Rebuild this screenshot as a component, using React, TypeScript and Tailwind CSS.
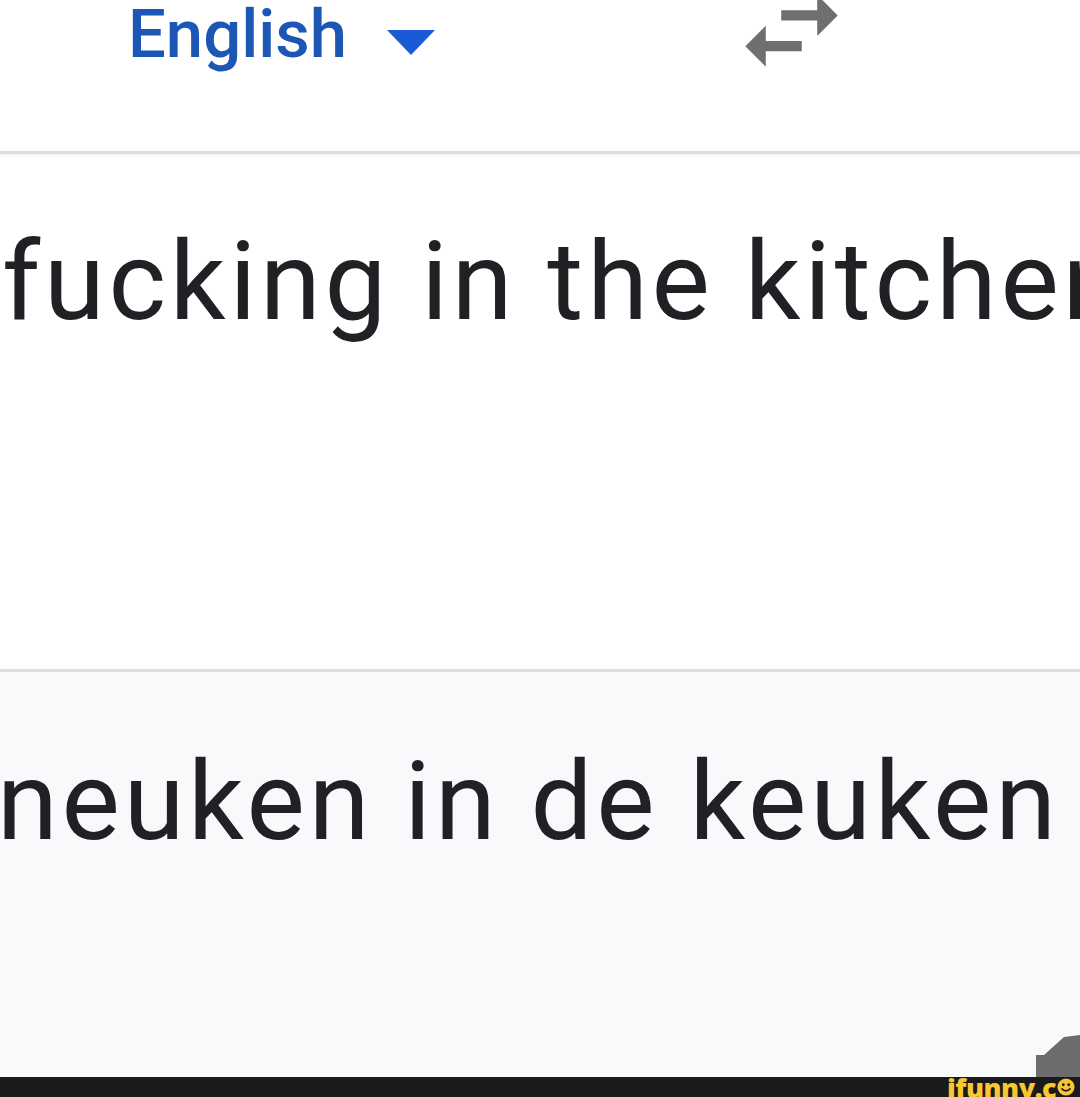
import React from 'react'

function SwapIcon() {
  return (
    <svg width="103" height="77" viewBox="2 6 20 15" fill="#6f6f6f">
      <path d="M6.99 11L3 15l3.99 4v-3H14v-2H6.99v-3zM21 9l-3.99-4v3H10v2h7.01v3L21 9z" />
    </svg>
  )
}

export default function App() {
  return (
    <div className="w-[1080px] h-[1097px] bg-white flex flex-col overflow-hidden relative font-['Roboto','Liberation_Sans',sans-serif] text-[#202124]">
      {/* Language bar */}
      <div className="h-[151px] flex items-start shrink-0">
        <div className="flex items-start pl-[128px] w-[740px]">
          <span className="text-[67px] leading-[68px] font-medium text-[#1c57b5]">English</span>
          <svg className="ml-[40px] mt-[30px]" width="48" height="25" viewBox="0 0 48 25">
            <polygon points="0,0 48,0 24,25" fill="#1a5ad6" />
          </svg>
        </div>
        <SwapIcon />
      </div>
      <div className="h-[3px] bg-[#dcdde0] shadow-[0_2px_3px_rgba(0,0,0,0.06)] shrink-0" />

      {/* Source text */}
      <div className="h-[515px] shrink-0 pt-[73px] whitespace-nowrap overflow-hidden">
        <p className="text-[110px] leading-[110px] tracking-[3.8px] pl-[2px]">fucking in the kitchen</p>
      </div>
      <div className="h-[3px] bg-[#dcdde0] shadow-[0_2px_3px_rgba(0,0,0,0.06)] shrink-0" />

      {/* Translation */}
      <div className="flex-1 bg-[#f8f9fa] pt-[75px] whitespace-nowrap overflow-hidden relative">
        <p className="text-[110px] leading-[110px] tracking-[3.8px] -ml-[3px]">neuken in de keuken</p>
        <svg className="absolute right-0 bottom-0" width="44" height="42" viewBox="0 0 44 42">
          <polygon points="0,42 0,20 8,20 28,2 44,0 44,42" fill="#6c6c6c" />
        </svg>
      </div>

      {/* Watermark bar */}
      <div className="h-[20px] bg-[#1a1a1a] shrink-0 flex justify-end items-start pr-[5px] overflow-hidden">
        <span className="text-[27px] leading-[22px] font-black text-[#f7c633] font-['Open_Sans',sans-serif] tracking-[-0.5px]">ifunny.c</span>
        <svg className="mt-[1px] ml-[1px]" width="18" height="18" viewBox="0 0 20 20">
          <circle cx="10" cy="10" r="9.5" fill="#f7c633" />
          <circle cx="7" cy="7.5" r="1.6" fill="#1a1a1a" />
          <circle cx="13" cy="7.5" r="1.6" fill="#1a1a1a" />
          <path d="M5 11.5 Q10 17 15 11.5" stroke="#1a1a1a" strokeWidth="1.8" fill="none" />
        </svg>
      </div>
    </div>
  )
}
